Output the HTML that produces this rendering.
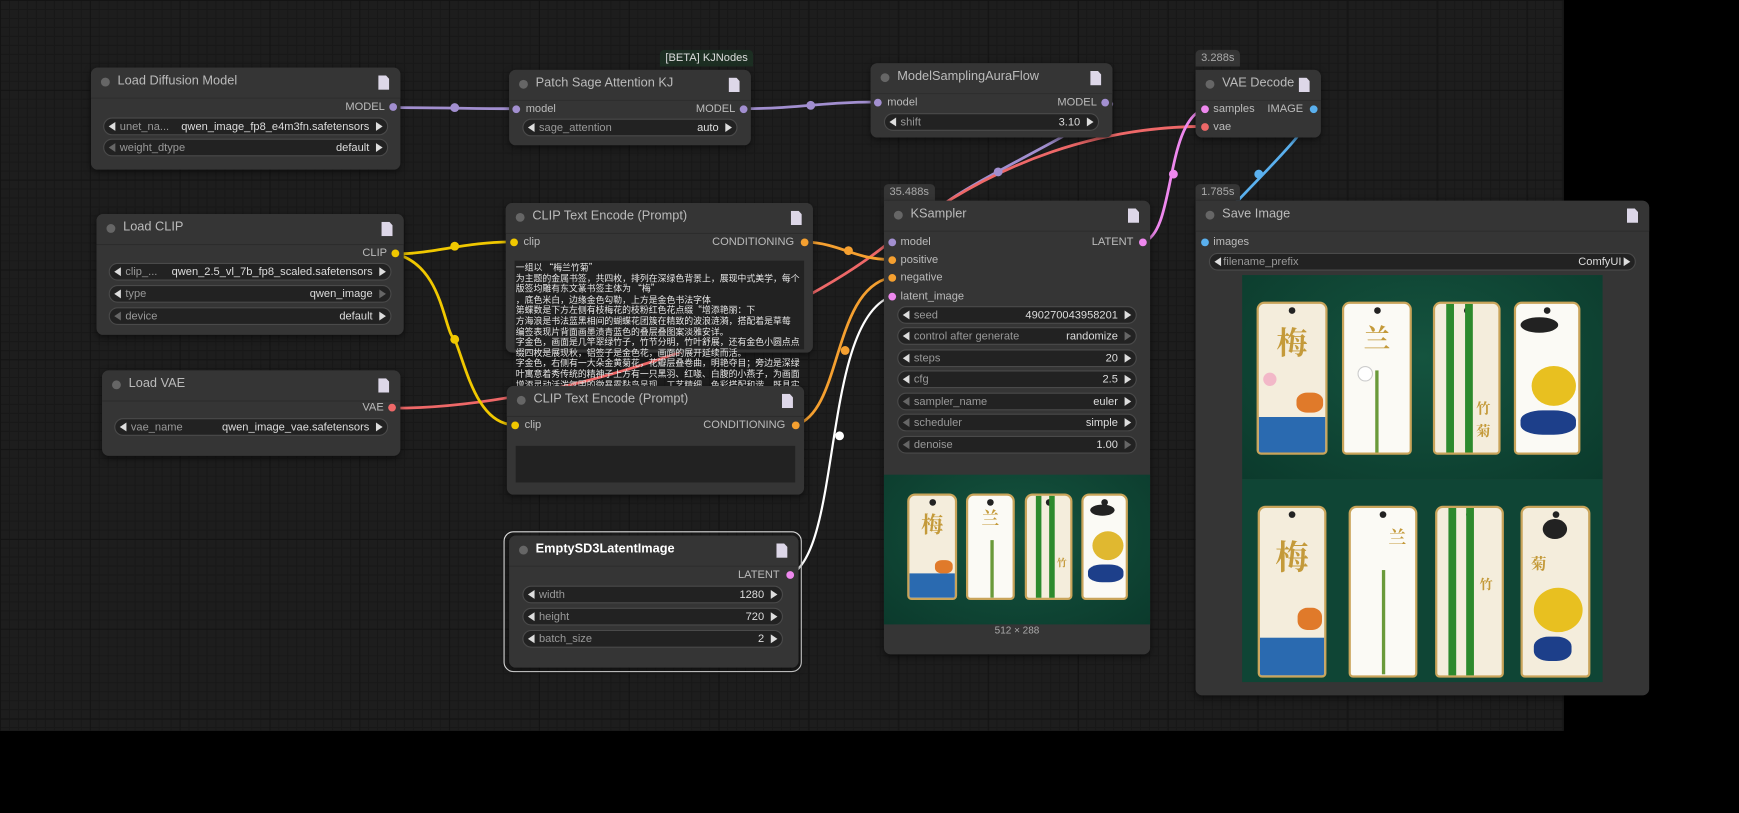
<!DOCTYPE html>
<html><head><meta charset="utf-8"><style>
*{box-sizing:border-box;margin:0;padding:0}
html,body{width:1739px;height:813px;overflow:hidden;background:#000;font-family:"Liberation Sans","Noto Sans CJK SC",sans-serif}
#w{position:absolute;left:0;top:0;width:1568px;height:733px;transform:scale(1.10906);transform-origin:0 0}
#bg{position:absolute;left:0;top:0;width:1410px;height:659px;background-color:#1d1d1d;
background-image:linear-gradient(#141414 1px,transparent 1px),linear-gradient(90deg,#141414 1px,transparent 1px),linear-gradient(#181818 1px,transparent 1px),linear-gradient(90deg,#181818 1px,transparent 1px);
background-size:81px 81px,81px 81px,8.1px 8.1px,8.1px 8.1px}
.n{position:absolute;background:#353535;border-radius:6px;box-shadow:0 2px 6px rgba(0,0,0,.5)}
.t{position:absolute;left:0;right:0;top:0;height:28px;border-bottom:1px solid #2c2c2c;border-radius:6px 6px 0 0;background:#353535}
.t span{position:absolute;left:24px;top:6px;font-size:11.5px;color:#bbb}
.t i{position:absolute;left:9px;top:9px;width:8px;height:8px;border-radius:50%;background:#666}
.t b{position:absolute;right:10px;top:7px;width:10px;height:13px;background:#ddd7e8;clip-path:polygon(0 0,70% 0,100% 25%,100% 100%,0 100%)}
.s{position:absolute;font-size:10px;color:#bbb;white-space:nowrap}
.d{position:absolute;width:7px;height:7px;border-radius:50%}
.wd{position:absolute;height:16px;border-radius:8px;background:#222;border:1px solid #4a4a4a;font-size:10px;color:#999}
.wd .l{position:absolute;left:14px;top:2px;white-space:nowrap}
.wd .v{position:absolute;right:16px;top:2px;color:#ddd;white-space:nowrap}
.wd:before{content:"";position:absolute;left:4px;top:3px;border:4.5px solid transparent;border-right:6px solid #ddd;border-left:0}
.wd:after{content:"";position:absolute;right:4px;top:3px;border:4.5px solid transparent;border-left:6px solid #ddd;border-right:0}
.wd.dl:before{border-right-color:#666}.wd.dr:after{border-left-color:#666}
.bd{position:absolute;height:15px;background:#353535;color:#aaa;font-size:10px;padding:2px 5px;border-radius:4px 4px 0 0}
.img{position:absolute;background:radial-gradient(ellipse at 50% 40%,#15543f,#0b3a2c);overflow:hidden}
.tag{position:absolute;background:#f4eddc;border:2px solid #c9a45a;border-radius:7px 7px 4px 4px;overflow:hidden}
.tag .c{position:absolute;left:0;right:0;text-align:center;color:#c49a3a;font-family:"Noto Serif CJK SC","Noto Sans CJK SC",serif;font-weight:bold}
.tag .h{position:absolute;left:50%;top:3px;width:6px;height:6px;margin-left:-3px;border-radius:50%;background:#222}
</style></head><body><div id="w">
<div id="bg"></div>

<svg style="position:absolute;left:0;top:0" width="1568" height="733">
<g fill="none" stroke-width="2.5">
<path d="M361 97 C400 97,420 98,464 98" stroke="#a28fd0"/>
<path d="M670 98 C720 98,740 92,790 92" stroke="#a28fd0"/>
<path d="M998 92 C1030 92,880 160,850 185 C830 205,820 218,804 218" stroke="#a28fd0"/>
<path d="M355 368 C500 368,700 300,800 220 C900 140,1000 114,1086 114" stroke="#ee6868"/>
<path d="M357 229 C390 229,420 218,464 218" stroke="#f0c800"/>
<path d="M357 229 C400 240,400 300,410 306 C420 330,430 383,464 383" stroke="#f0c800"/>
<path d="M726 218 C760 220,770 234,804 234" stroke="#f5a030"/>
<path d="M718 383 C760 370,750 260,804 250" stroke="#f5a030"/>
<path d="M1031 218 C1060 210,1050 110,1086 98" stroke="#ee88ee"/>
<path d="M711 519 C760 500,740 290,804 267" stroke="#fff" stroke-width="2"/>
<path d="M1184 98 C1184 120,1100 190,1086 218" stroke="#5ab0ee"/>
</g>
<g>
<circle cx="410" cy="97" r="4" fill="#a28fd0"/><circle cx="731" cy="95" r="4" fill="#a28fd0"/><circle cx="900" cy="155" r="4" fill="#a28fd0"/>
<circle cx="410" cy="222" r="4" fill="#f0c800"/><circle cx="410" cy="306" r="4" fill="#f0c800"/>
<circle cx="765" cy="226" r="4" fill="#f5a030"/><circle cx="762" cy="316" r="4" fill="#f5a030"/>
<circle cx="1058" cy="157" r="4" fill="#ee88ee"/><circle cx="757" cy="393" r="4" fill="#fff"/><circle cx="1135" cy="157" r="4" fill="#5ab0ee"/>
</g></svg>

<div class="n" style="left:82px;top:61px;width:279px;height:92px"><div class="t"><i></i><span>Load Diffusion Model</span><b></b></div>
<div class="s" style="right:14px;top:30px">MODEL</div><div class="d" style="right:3px;top:32px;background:#a28fd0"></div>
<div class="wd" style="left:11px;right:11px;top:45px"><span class="l">unet_na...</span><span class="v">qwen_image_fp8_e4m3fn.safetensors</span></div>
<div class="wd dl" style="left:11px;right:11px;top:64px"><span class="l">weight_dtype</span><span class="v">default</span></div></div>

<div class="bd" style="left:595px;top:45px;background:#1c2e22;color:#ddd">[BETA] KJNodes</div>
<div class="n" style="left:459px;top:63px;width:218px;height:68px"><div class="t"><i></i><span>Patch Sage Attention KJ</span><b></b></div>
<div class="d" style="left:3px;top:32px;background:#a28fd0"></div><div class="s" style="left:15px;top:30px">model</div>
<div class="s" style="right:14px;top:30px">MODEL</div><div class="d" style="right:3px;top:32px;background:#a28fd0"></div>
<div class="wd" style="left:12px;right:12px;top:44px"><span class="l">sage_attention</span><span class="v">auto</span></div></div>

<div class="n" style="left:785px;top:57px;width:218px;height:67px"><div class="t"><i></i><span>ModelSamplingAuraFlow</span><b></b></div>
<div class="d" style="left:3px;top:32px;background:#a28fd0"></div><div class="s" style="left:15px;top:30px">model</div>
<div class="s" style="right:14px;top:30px">MODEL</div><div class="d" style="right:3px;top:32px;background:#a28fd0"></div>
<div class="wd" style="left:12px;right:12px;top:45px"><span class="l">shift</span><span class="v">3.10</span></div></div>

<div class="bd" style="left:1078px;top:45px">3.288s</div>
<div class="n" style="left:1078px;top:63px;width:113px;height:61px;border-radius:0 6px 6px 6px"><div class="t"><i></i><span>VAE Decode</span><b></b></div>
<div class="d" style="left:5px;top:32px;background:#ee88ee"></div><div class="s" style="left:16px;top:30px">samples</div>
<div class="s" style="right:16px;top:30px">IMAGE</div><div class="d" style="right:3px;top:32px;background:#5ab0ee"></div>
<div class="d" style="left:5px;top:48px;background:#ee6868"></div><div class="s" style="left:16px;top:46px">vae</div></div>

<div class="n" style="left:87px;top:193px;width:277px;height:109px"><div class="t"><i></i><span>Load CLIP</span><b></b></div>
<div class="s" style="right:15px;top:30px">CLIP</div><div class="d" style="right:4px;top:32px;background:#f0c800"></div>
<div class="wd" style="left:11px;right:11px;top:44px"><span class="l">clip_...</span><span class="v">qwen_2.5_vl_7b_fp8_scaled.safetensors</span></div>
<div class="wd dr" style="left:11px;right:11px;top:64px"><span class="l">type</span><span class="v">qwen_image</span></div>
<div class="wd dl" style="left:11px;right:11px;top:84px"><span class="l">device</span><span class="v">default</span></div></div>

<div class="n" style="left:92px;top:334px;width:269px;height:77px"><div class="t"><i></i><span>Load VAE</span><b></b></div>
<div class="s" style="right:15px;top:28px">VAE</div><div class="d" style="right:4px;top:30px;background:#ee6868"></div>
<div class="wd" style="left:11px;right:11px;top:43px"><span class="l">vae_name</span><span class="v">qwen_image_vae.safetensors</span></div></div>

<div class="n" style="left:456px;top:183px;width:277px;height:135px"><div class="t"><i></i><span>CLIP Text Encode (Prompt)</span><b></b></div>
<div class="d" style="left:4px;top:32px;background:#f0c800"></div><div class="s" style="left:16px;top:30px">clip</div>
<div class="s" style="right:17px;top:30px">CONDITIONING</div><div class="d" style="right:4px;top:32px;background:#f5a030"></div>
<div style="position:absolute;left:8px;right:8px;top:52px;height:80px;background:#222"></div></div>
<div style="position:absolute;left:465px;top:237px;width:262px;font-size:8px;line-height:9.6px;color:#e8e8e8;font-family:'Noto Sans CJK SC',sans-serif;overflow:hidden;height:114px">一组以 “梅兰竹菊”<br>为主题的金属书签，共四枚，排列在深绿色背景上，展现中式美学，每个<br>版签均雕有东文篆书签主体为 “梅”<br>，底色米白，边缘金色勾勒，上方是金色书法字体<br>第蝶数是下方左侧有枝梅花的枝粉红色花点缀“增添艳丽：下<br>方海浪是书法蓝黑相间的蝴蝶花团簇在精致的波浪涟漪，搭配着是草莓<br>编签表现片背面画墨渍青蓝色的叠层叠图案淡雅安详。<br>字金色，画面是几竿翠绿竹子，竹节分明，竹叶舒展，还有金色小圆点点<br>缀四枚是展现秋，铝签子是金色花，画面的展开延续而活。<br>字金色，右侧有一大朵金黄菊花，花瓣层叠卷曲，明艳夺目；旁边是深绿<br>叶寓意着秀传统的精神子上方有一只黑羽、红喙、白腹的小燕子，为画面<br>增添灵动活泼氛围的微暴露黏鸟呈现，工艺精细，色彩搭配和谐，既具实<br>用价值，又蕴含中式文化韵味，是文具也是艺术小物，适合喜爱传统文化</div>

<div class="n" style="left:457px;top:348px;width:268px;height:98px"><div class="t"><i></i><span>CLIP Text Encode (Prompt)</span><b></b></div>
<div class="d" style="left:4px;top:32px;background:#f0c800"></div><div class="s" style="left:16px;top:30px">clip</div>
<div class="s" style="right:17px;top:30px">CONDITIONING</div><div class="d" style="right:4px;top:32px;background:#f5a030"></div>
<div style="position:absolute;left:8px;right:8px;top:54px;height:33px;background:#222"></div></div>

<div style="position:absolute;left:454px;top:479px;width:269px;height:127px;border:1.5px solid #ddd;border-radius:9px"></div>
<div class="n" style="left:459px;top:483px;width:261px;height:119px"><div class="t" style="top:0"><i></i><span style="color:#fff;font-weight:bold">EmptySD3LatentImage</span><b></b></div>
<div class="s" style="right:17px;top:30px">LATENT</div><div class="d" style="right:4px;top:32px;background:#ee88ee"></div>
<div class="wd" style="left:12px;right:14px;top:45px"><span class="l">width</span><span class="v">1280</span></div>
<div class="wd" style="left:12px;right:14px;top:65px"><span class="l">height</span><span class="v">720</span></div>
<div class="wd" style="left:12px;right:14px;top:85px"><span class="l">batch_size</span><span class="v">2</span></div></div>

<div class="bd" style="left:797px;top:166px">35.488s</div>
<div class="n" style="left:797px;top:181px;width:240px;height:409px;border-radius:0 6px 6px 6px"><div class="t"><i></i><span>KSampler</span><b></b></div>
<div class="d" style="left:4px;top:34px;background:#a28fd0"></div><div class="s" style="left:15px;top:32px">model</div>
<div class="s" style="right:15px;top:32px">LATENT</div><div class="d" style="right:3px;top:34px;background:#ee88ee"></div>
<div class="d" style="left:4px;top:50px;background:#f5a030"></div><div class="s" style="left:15px;top:48px">positive</div>
<div class="d" style="left:4px;top:66px;background:#f5a030"></div><div class="s" style="left:15px;top:64px">negative</div>
<div class="d" style="left:4px;top:83px;background:#ee88ee"></div><div class="s" style="left:15px;top:81px">latent_image</div>
<div class="wd" style="left:12px;right:12px;top:95px"><span class="l">seed</span><span class="v">490270043958201</span></div>
<div class="wd dr" style="left:12px;right:12px;top:114px"><span class="l">control after generate</span><span class="v">randomize</span></div>
<div class="wd" style="left:12px;right:12px;top:134px"><span class="l">steps</span><span class="v">20</span></div>
<div class="wd" style="left:12px;right:12px;top:153px"><span class="l">cfg</span><span class="v">2.5</span></div>
<div class="wd dl" style="left:12px;right:12px;top:173px"><span class="l">sampler_name</span><span class="v">euler</span></div>
<div class="wd dl" style="left:12px;right:12px;top:192px"><span class="l">scheduler</span><span class="v">simple</span></div>
<div class="wd dl dr" style="left:12px;right:12px;top:212px"><span class="l">denoise</span><span class="v">1.00</span></div>
<div class="s" style="left:0;right:0;text-align:center;top:382px;font-size:9px;color:#aaa">512 × 288</div></div>
<div class="img" style="left:797px;top:428px;width:240px;height:135px">
<div class="tag" style="left:21px;top:17px;width:45px;height:96px"><div class="h"></div><div class="c" style="top:10px;font-size:20px">梅</div><div style="position:absolute;left:0;right:0;bottom:0;height:22px;background:#2a6ab0"></div><div style="position:absolute;right:2px;top:58px;width:16px;height:12px;background:#e07a2a;border-radius:40%"></div></div>
<div class="tag" style="left:74px;top:17px;width:44px;height:96px;background:#fbfaf5"><div class="h"></div><div class="c" style="top:8px;font-size:16px">兰</div><div style="position:absolute;left:20px;top:40px;width:3px;height:52px;background:#6a9a3a"></div></div>
<div class="tag" style="left:127px;top:17px;width:43px;height:96px"><div class="h"></div><div style="position:absolute;left:8px;top:0;width:5px;height:96px;background:#2d8a2d"></div><div style="position:absolute;left:20px;top:0;width:5px;height:96px;background:#2d8a2d"></div><div class="c" style="top:54px;left:24px;font-size:9px">竹</div></div>
<div class="tag" style="left:178px;top:17px;width:42px;height:96px;background:#fbfaf5"><div class="h"></div><div style="position:absolute;left:6px;top:8px;width:22px;height:10px;background:#222;border-radius:50%"></div><div style="position:absolute;left:8px;top:32px;width:28px;height:26px;background:#e0b830;border-radius:50%"></div><div style="position:absolute;left:4px;top:62px;width:32px;height:16px;background:#1d3f8a;border-radius:40%"></div></div>
</div>

<div class="bd" style="left:1078px;top:166px">1.785s</div>
<div class="n" style="left:1078px;top:181px;width:409px;height:446px;border-radius:0 6px 6px 6px"><div class="t"><i></i><span>Save Image</span><b></b></div>
<div class="d" style="left:5px;top:34px;background:#5ab0ee"></div><div class="s" style="left:16px;top:32px">images</div>
<div class="wd" style="left:12px;right:12px;top:47px"><span class="l" style="left:12px">filename_prefix</span><span class="v" style="right:12px">ComfyUI</span></div></div>

<div class="img" style="left:1120px;top:248px;width:325px;height:184px">
<div class="tag" style="left:13px;top:24px;width:64px;height:138px"><div class="h"></div><div class="c" style="top:14px;font-size:28px">梅</div><div style="position:absolute;left:0;right:0;bottom:0;height:32px;background:#2a6ab0"></div><div style="position:absolute;right:2px;top:80px;width:24px;height:18px;background:#e07a2a;border-radius:40%"></div><div style="position:absolute;left:4px;top:62px;width:12px;height:12px;background:#f2b8c8;border-radius:50%"></div></div>
<div class="tag" style="left:90px;top:24px;width:63px;height:138px;background:#fbfaf5"><div class="h"></div><div class="c" style="top:12px;font-size:24px">兰</div><div style="position:absolute;left:12px;top:56px;width:14px;height:14px;background:#fff;border:1px solid #ccc;border-radius:50%"></div><div style="position:absolute;left:28px;top:60px;width:3px;height:74px;background:#6a9a3a"></div></div>
<div class="tag" style="left:172px;top:24px;width:61px;height:138px"><div class="h"></div><div style="position:absolute;left:10px;top:0;width:7px;height:138px;background:#2d8a2d"></div><div style="position:absolute;left:27px;top:0;width:7px;height:138px;background:#2d8a2d"></div><div class="c" style="top:84px;left:30px;font-size:13px;line-height:20px">竹<br>菊</div></div>
<div class="tag" style="left:245px;top:24px;width:60px;height:138px;background:#fbfaf5"><div class="h"></div><div style="position:absolute;left:4px;top:12px;width:34px;height:14px;background:#222;border-radius:50%"></div><div style="position:absolute;left:14px;top:56px;width:40px;height:36px;background:#e8c020;border-radius:50%"></div><div style="position:absolute;left:4px;top:96px;width:50px;height:22px;background:#1d3f8a;border-radius:40%"></div></div>
</div>
<div class="img" style="left:1120px;top:432px;width:325px;height:183px;background:#0f4535">
<div class="tag" style="left:14px;top:24px;width:62px;height:155px"><div class="h"></div><div class="c" style="top:20px;font-size:30px">梅</div><div style="position:absolute;left:0;right:0;bottom:0;height:34px;background:#2a6ab0"></div><div style="position:absolute;right:2px;top:90px;width:22px;height:20px;background:#e07a2a;border-radius:40%"></div></div>
<div class="tag" style="left:96px;top:24px;width:62px;height:155px;background:#fbfaf5"><div class="h"></div><div class="c" style="top:14px;left:26px;font-size:16px">兰</div><div style="position:absolute;left:28px;top:56px;width:3px;height:94px;background:#6a9a3a"></div></div>
<div class="tag" style="left:174px;top:24px;width:62px;height:155px"><div class="h"></div><div style="position:absolute;left:10px;top:0;width:7px;height:155px;background:#2d8a2d"></div><div style="position:absolute;left:26px;top:0;width:7px;height:155px;background:#2d8a2d"></div><div class="c" style="top:60px;left:30px;font-size:12px">竹</div></div>
<div class="tag" style="left:251px;top:24px;width:63px;height:155px"><div class="h"></div><div style="position:absolute;left:18px;top:10px;width:22px;height:18px;background:#222;border-radius:50%"></div><div class="c" style="top:40px;left:-30px;font-size:14px">菊</div><div style="position:absolute;left:10px;top:72px;width:44px;height:40px;background:#e8c020;border-radius:50%"></div><div style="position:absolute;left:10px;top:116px;width:34px;height:22px;background:#1d3f8a;border-radius:40%"></div></div>
</div>
</div></body></html>
